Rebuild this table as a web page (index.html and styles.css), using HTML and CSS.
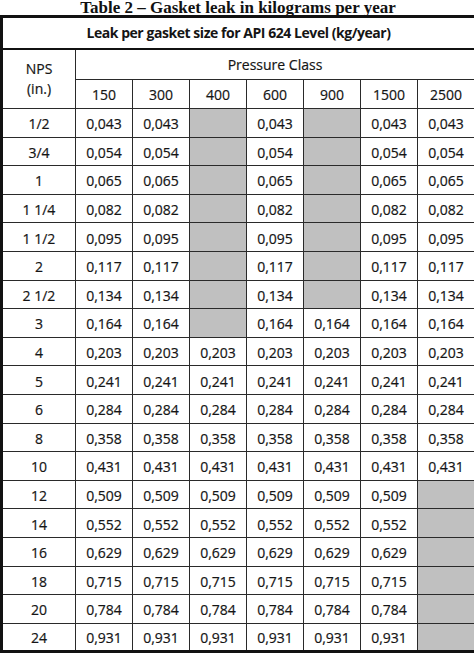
FILE: index.html
```html
<!DOCTYPE html>
<html>
<head>
<meta charset="utf-8">
<link rel="stylesheet" href="styles.css">
</head>
<body>
<div class="title">Table 2 – Gasket leak in kilograms per year</div>
<table class="leak">
<colgroup>
<col class="c-nps"><col class="c-v"><col class="c-v"><col class="c-v"><col class="c-v"><col class="c-v"><col class="c-v"><col class="c-last">
</colgroup>
<thead>
<tr class="h1"><th colspan="8" class="main">Leak per gasket size for API 624 Level (kg/year)</th></tr>
<tr class="h2"><th rowspan="2" class="nps">NPS<br>(in.)</th><th colspan="7" class="pc">Pressure Class</th></tr>
<tr class="h3"><th>150</th><th>300</th><th>400</th><th>600</th><th>900</th><th>1500</th><th>2500</th></tr>
</thead>
<tbody>
<tr><td>1/2</td><td>0,043</td><td>0,043</td><td class="g"></td><td>0,043</td><td class="g"></td><td>0,043</td><td>0,043</td></tr>
<tr><td>3/4</td><td>0,054</td><td>0,054</td><td class="g"></td><td>0,054</td><td class="g"></td><td>0,054</td><td>0,054</td></tr>
<tr><td>1</td><td>0,065</td><td>0,065</td><td class="g"></td><td>0,065</td><td class="g"></td><td>0,065</td><td>0,065</td></tr>
<tr><td>1 1/4</td><td>0,082</td><td>0,082</td><td class="g"></td><td>0,082</td><td class="g"></td><td>0,082</td><td>0,082</td></tr>
<tr><td>1 1/2</td><td>0,095</td><td>0,095</td><td class="g"></td><td>0,095</td><td class="g"></td><td>0,095</td><td>0,095</td></tr>
<tr><td>2</td><td>0,117</td><td>0,117</td><td class="g"></td><td>0,117</td><td class="g"></td><td>0,117</td><td>0,117</td></tr>
<tr><td>2 1/2</td><td>0,134</td><td>0,134</td><td class="g"></td><td>0,134</td><td class="g"></td><td>0,134</td><td>0,134</td></tr>
<tr><td>3</td><td>0,164</td><td>0,164</td><td class="g"></td><td>0,164</td><td>0,164</td><td>0,164</td><td>0,164</td></tr>
<tr><td>4</td><td>0,203</td><td>0,203</td><td>0,203</td><td>0,203</td><td>0,203</td><td>0,203</td><td>0,203</td></tr>
<tr><td>5</td><td>0,241</td><td>0,241</td><td>0,241</td><td>0,241</td><td>0,241</td><td>0,241</td><td>0,241</td></tr>
<tr><td>6</td><td>0,284</td><td>0,284</td><td>0,284</td><td>0,284</td><td>0,284</td><td>0,284</td><td>0,284</td></tr>
<tr><td>8</td><td>0,358</td><td>0,358</td><td>0,358</td><td>0,358</td><td>0,358</td><td>0,358</td><td>0,358</td></tr>
<tr><td>10</td><td>0,431</td><td>0,431</td><td>0,431</td><td>0,431</td><td>0,431</td><td>0,431</td><td>0,431</td></tr>
<tr><td>12</td><td>0,509</td><td>0,509</td><td>0,509</td><td>0,509</td><td>0,509</td><td>0,509</td><td class="g"></td></tr>
<tr><td>14</td><td>0,552</td><td>0,552</td><td>0,552</td><td>0,552</td><td>0,552</td><td>0,552</td><td class="g"></td></tr>
<tr><td>16</td><td>0,629</td><td>0,629</td><td>0,629</td><td>0,629</td><td>0,629</td><td>0,629</td><td class="g"></td></tr>
<tr><td>18</td><td>0,715</td><td>0,715</td><td>0,715</td><td>0,715</td><td>0,715</td><td>0,715</td><td class="g"></td></tr>
<tr><td>20</td><td>0,784</td><td>0,784</td><td>0,784</td><td>0,784</td><td>0,784</td><td>0,784</td><td class="g"></td></tr>
<tr><td>24</td><td>0,931</td><td>0,931</td><td>0,931</td><td>0,931</td><td>0,931</td><td>0,931</td><td class="g"></td></tr>
</tbody>
</table>
</body>
</html>
```
FILE: styles.css
```css
html, body {
  margin: 0;
  padding: 0;
  background: #ffffff;
}
body {
  width: 474px;
  height: 653px;
  overflow: hidden;
}
.title {
  height: 15px;
  line-height: 15px;
  font-family: "Liberation Serif", "Times New Roman", serif;
  font-weight: bold;
  font-size: 17px;
  text-align: center;
  color: #111;
  padding-left: 2px;
}
.leak {
  width: 474px;
  border-collapse: collapse;
  table-layout: fixed;
  border: 3px solid #111;
  font-family: "Open Sans", "Noto Sans", sans-serif;
  font-size: 14px;
  color: #151515;
  -webkit-text-stroke: 0.2px #151515;
}
.c-nps { width: 74px; }
.c-v { width: 57px; }
.c-last { width: 58px; }
.leak th, .leak td {
  border: 1px solid #2a2a2a;
  padding: 0;
  text-align: center;
  vertical-align: middle;
  font-weight: normal;
  white-space: nowrap;
}
.leak .main {
  font-weight: bold;
  font-size: 14px;
  letter-spacing: -0.45px;
  -webkit-text-stroke: 0;
  border-bottom-width: 2px;
  border-bottom-color: #111;
}
.h1 { height: 32px; }
.h2 { height: 31px; }
.h3 { height: 29px; }
.nps { line-height: 20px; padding-top: 3px; }
.pc { padding-bottom: 2px; }
.leak tbody tr { height: 28.6px; }
.leak tbody td { padding-top: 2px; }
.leak td.g { background: #c0c0c0; }
```
